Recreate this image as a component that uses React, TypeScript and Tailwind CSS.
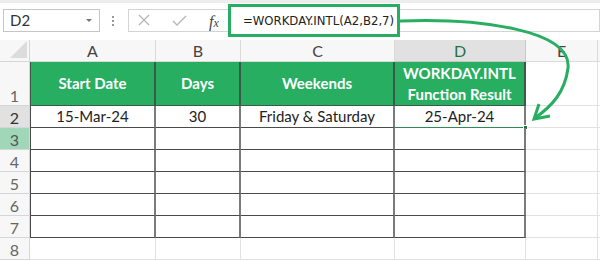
import React from "react";

const GREEN = "#27ae60";

const cols = [
  { key: "A", w: "w-[126px]" },
  { key: "B", w: "w-[85px]" },
  { key: "C", w: "w-[154px]" },
  { key: "D", w: "w-[131px]" },
];

const rows: string[][] = [
  ["15-Mar-24", "30", "Friday & Saturday", "25-Apr-24"],
  ["", "", "", ""],
  ["", "", "", ""],
  ["", "", "", ""],
  ["", "", "", ""],
  ["", "", "", ""],
];

function RowHead({ n, tone }: { n: number; tone?: "sel" | "hl" }) {
  const bg =
    tone === "sel" ? "bg-[#e1e1e1] text-[#333]" : tone === "hl" ? "bg-[#a0d7b9] text-[#555]" : "bg-[#f7f7f7] text-[#666]";
  return (
    <div
      className={`w-[30px] h-full shrink-0 flex items-end justify-center pb-[1px] border-r border-b border-[#d6d6d6] text-[16px] leading-none ${bg}`}
    >
      {n}
    </div>
  );
}

export default function App() {
  return (
    <div
      className="relative w-[600px] h-[261px] bg-white overflow-hidden"
      style={{ fontFamily: "Lato, 'Open Sans', sans-serif" }}
    >
      {/* Toolbar */}
      <div className="h-[40px] bg-white border-t-[3px] border-[#ededed] relative">
        <div className="absolute left-[3px] top-[6px] w-[97px] h-[23px] border border-[#c6c6c6] flex items-center px-[6px] text-[15px] text-[#333]">
          <span className="flex-1">D2</span>
          <span className="w-0 h-0 border-l-[3px] border-r-[3px] border-t-[3px] border-l-transparent border-r-transparent border-t-[#777] mr-[1px]" />
        </div>
        <div className="absolute left-[112px] top-[13px] flex flex-col gap-[2px]">
          <span className="w-[2px] h-[2px] bg-[#999]" />
          <span className="w-[2px] h-[2px] bg-[#999]" />
          <span className="w-[2px] h-[2px] bg-[#999]" />
        </div>
        <div className="absolute left-[128px] top-[6px] w-[472px] h-[23px] border border-[#d4d4d4] flex items-center">
          <svg width="100" height="21" viewBox="0 0 100 21" className="shrink-0">
            <path d="M10 5 L20 15 M20 5 L10 15" stroke="#b5b5b5" strokeWidth="1.3" fill="none" />
            <path d="M44 11 L48 15 L57 6" stroke="#b5b5b5" strokeWidth="1.3" fill="none" />
          </svg>
          <span
            className="absolute left-[80px] top-[0px] text-[16px] italic text-[#444]"
            style={{ fontFamily: "'Liberation Serif', serif" }}
          >
            f<span className="text-[12px]">x</span>
          </span>
        </div>
        {/* highlighted formula */}
        <div
          className="absolute left-[228px] top-[1px] w-[172px] h-[33px] border-[3px] bg-white flex items-center pl-[12px] text-[13px] text-[#222]"
          style={{ borderColor: GREEN, fontFamily: "'Liberation Sans Narrow', 'DejaVu Sans Condensed', sans-serif" }}
        >
          =WORKDAY.INTL(A2,B2,7)
        </div>
      </div>

      {/* Column headers */}
      <div className="flex h-[22px] text-[16px] text-[#444]">
        <div className="w-[30px] shrink-0 border-r border-b border-[#d6d6d6] bg-[#f7f7f7] relative">
          <svg width="30" height="22" className="absolute inset-0">
            <polygon points="10,18 27,18 27,1" fill="#dcdcdc" />
          </svg>
        </div>
        {cols.map((c) => (
          <div
            key={c.key}
            className={`${c.w} shrink-0 flex items-center justify-center border-r border-b ${
              c.key === "D" ? "bg-[#e1e1e1] border-[#c6c6c6] text-[#217346]" : "bg-[#f7f7f7] border-[#dadada]"
            }`}
          >
            {c.key}
          </div>
        ))}
        <div className="w-[72px] shrink-0 flex items-center justify-center bg-[#f7f7f7] border-r border-b border-[#dadada]">E</div>
        <div className="flex-1 bg-[#f7f7f7] border-b border-[#dadada]" />
      </div>

      {/* Row 1: header */}
      <div className="flex h-[44px]">
        <RowHead n={1} />
        {["Start Date", "Days", "Weekends"].map((t, i) => (
          <div
            key={t}
            className={`${cols[i].w} shrink-0 flex items-center justify-center text-white font-bold text-[15px] border-r-2 border-b border-[#3d5a48] ${
              i === 0 ? "border-l" : ""
            }`}
            style={{ backgroundColor: GREEN }}
          >
            {t}
          </div>
        ))}
        <div
          className="w-[131px] shrink-0 flex flex-col items-center justify-center text-white font-bold text-[15px] leading-[21px] border-r-2 border-b border-[#3d5a48]"
          style={{ backgroundColor: GREEN }}
        >
          <span>WORKDAY.INTL</span>
          <span>Function Result</span>
        </div>
        <div className="w-[72px] shrink-0 border-r border-b border-[#e2e2e2]" />
        <div className="flex-1 border-b border-[#e2e2e2]" />
      </div>

      {/* Rows 2-7 */}
      {rows.map((r, ri) => (
        <div key={ri} className="flex h-[22px]">
          <RowHead n={ri + 2} tone={ri === 0 ? "sel" : ri === 1 ? "hl" : undefined} />
          {r.map((v, ci) => (
            <div
              key={ci}
              className={`${cols[ci].w} shrink-0 relative flex items-center justify-center text-[15px] text-[#222] border-r-2 border-b border-r-[#7b7b7b] ${
                ri === 0 && ci === 3 ? "border-b-[#2e8b57]" : "border-b-[#4a4a4a]"
              } ${ci === 0 ? "border-l border-l-[#4a4a4a]" : ""}`}
            >
              {v}
              {ri === 0 && ci === 3 && (
                <span
                  className="absolute right-[-4px] bottom-[-3px] w-[5px] h-[5px] border border-white"
                  style={{ backgroundColor: "#217346" }}
                />
              )}
            </div>
          ))}
          <div className="w-[72px] shrink-0 border-r border-b border-[#e2e2e2]" />
          <div className="flex-1 border-b border-[#e2e2e2]" />
        </div>
      ))}

      {/* Row 8 */}
      <div className="flex h-[22px]">
        <RowHead n={8} />
        {cols.map((c) => (
          <div key={c.key} className={`${c.w} shrink-0 border-r border-b border-[#e2e2e2]`} />
        ))}
        <div className="w-[72px] shrink-0 border-r border-b border-[#e2e2e2]" />
        <div className="flex-1 border-b border-[#e2e2e2]" />
      </div>

      {/* Arrow */}
      <svg className="absolute inset-0 pointer-events-none" width="600" height="261">
        <path
          d="M400 21 C480 18 572 30 568 68 C565 92 552 106 535 118"
          stroke={GREEN}
          strokeWidth="3"
          fill="none"
        />
        <path d="M539 104 L534 119 L550 116" stroke={GREEN} strokeWidth="3" fill="none" strokeLinejoin="miter" />
      </svg>
    </div>
  );
}
